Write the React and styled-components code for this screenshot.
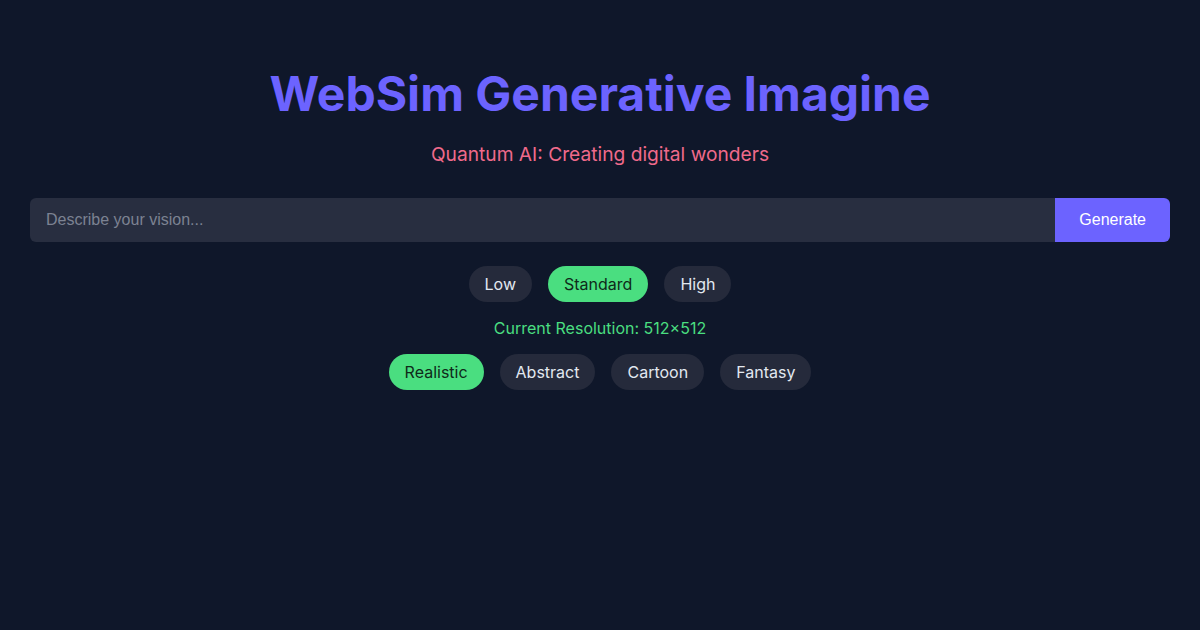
import React, { useState } from "react";
import styled, { createGlobalStyle } from "styled-components";

const Global = createGlobalStyle`
  html, body { margin: 0; padding: 0; background: #0f172a; }
  body { font-family: Inter, "Noto Sans", sans-serif; color: #e2e8f0; }
  * { box-sizing: border-box; }
`;

const Page = styled.div`
  min-height: 630px;
  padding: 65px 30px 0;
  display: flex;
  flex-direction: column;
  align-items: center;
`;

const Title = styled.h1`
  margin: 0;
  font-size: 48px;
  line-height: 58px;
  font-weight: 700;
  color: #6c63ff;
  text-align: center;
`;

const Subtitle = styled.p`
  margin: 19px 0 0;
  font-size: 19.2px;
  line-height: 24px;
  color: #ef6a8b;
  text-align: center;
`;

const InputRow = styled.div`
  margin-top: 32px;
  width: 100%;
  display: flex;
  height: 44px;
`;

const PromptInput = styled.input`
  flex: 1;
  height: 100%;
  border: none;
  outline: none;
  background: #282e40;
  color: #e2e8f0;
  border-radius: 6px 0 0 6px;
  padding: 0 16px;
  font-family: "Liberation Sans", Arial, sans-serif;
  font-size: 16px;
  &::placeholder { color: #7c8292; }
`;

const GenerateButton = styled.button`
  height: 100%;
  border: none;
  background: #6c63ff;
  color: #ffffff;
  border-radius: 0 6px 6px 0;
  padding: 0 24px;
  font-family: "Liberation Sans", Arial, sans-serif;
  font-size: 16px;
  cursor: pointer;
`;

const PillRow = styled.div`
  margin-top: ${(p) => p.$top}px;
  display: flex;
  gap: 16px;
  justify-content: center;
`;

const Pill = styled.button`
  height: 36px;
  padding: 0 16px;
  border: none;
  border-radius: 18px;
  font-family: Inter, "Noto Sans", sans-serif;
  font-size: 16px;
  background: ${(p) => (p.$active ? "#4ade80" : "#252a3b")};
  color: ${(p) => (p.$active ? "#0f2a1a" : "#e2e8f0")};
  cursor: pointer;
`;

const Resolution = styled.div`
  margin-top: 16px;
  font-size: 16px;
  line-height: 20px;
  color: #4ade80;
`;

const resolutions = [
  { label: "Low", size: "256×256" },
  { label: "Standard", size: "512×512" },
  { label: "High", size: "1024×1024" },
];
const styles = ["Realistic", "Abstract", "Cartoon", "Fantasy"];

export default function App() {
  const [res, setRes] = useState(1);
  const [style, setStyle] = useState(0);
  return (
    <>
      <Global />
      <Page>
        <Title>WebSim Generative Imagine</Title>
        <Subtitle>Quantum AI: Creating digital wonders</Subtitle>
        <InputRow>
          <PromptInput placeholder="Describe your vision..." />
          <GenerateButton>Generate</GenerateButton>
        </InputRow>
        <PillRow $top={24}>
          {resolutions.map((r, i) => (
            <Pill key={r.label} $active={i === res} onClick={() => setRes(i)}>
              {r.label}
            </Pill>
          ))}
        </PillRow>
        <Resolution>Current Resolution: {resolutions[res].size}</Resolution>
        <PillRow $top={16}>
          {styles.map((s, i) => (
            <Pill key={s} $active={i === style} onClick={() => setStyle(i)}>
              {s}
            </Pill>
          ))}
        </PillRow>
      </Page>
    </>
  );
}
